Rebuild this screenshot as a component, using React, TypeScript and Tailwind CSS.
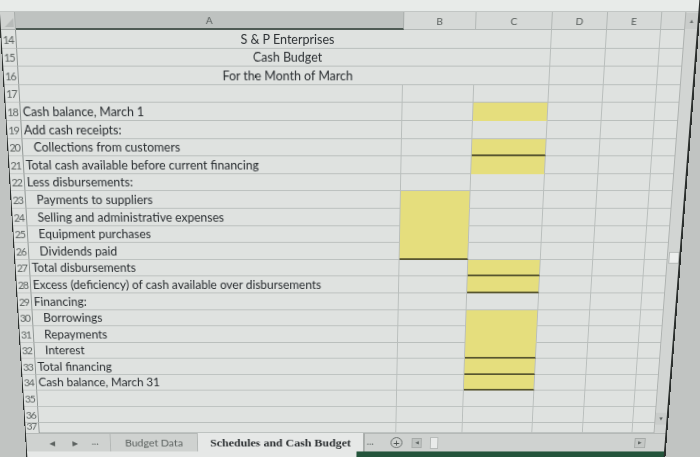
import React from 'react';

type Mark = 'y' | 'yb';

interface Row {
    n: number;
    label?: string;
    title?: string;
    indent?: boolean;
    b?: Mark;
    c?: Mark;
}

const rows: Row[] = [
    { n: 14, title: 'S & P Enterprises' },
    { n: 15, title: 'Cash Budget' },
    { n: 16, title: 'For the Month of March' },
    { n: 17 },
    { n: 18, label: 'Cash balance, March 1', c: 'y' },
    { n: 19, label: 'Add cash receipts:' },
    { n: 20, label: 'Collections from customers', indent: true, c: 'yb' },
    { n: 21, label: 'Total cash available before current financing', c: 'y' },
    { n: 22, label: 'Less disbursements:' },
    { n: 23, label: 'Payments to suppliers', indent: true, b: 'y' },
    { n: 24, label: 'Selling and administrative expenses', indent: true, b: 'y' },
    { n: 25, label: 'Equipment purchases', indent: true, b: 'y' },
    { n: 26, label: 'Dividends paid', indent: true, b: 'yb' },
    { n: 27, label: 'Total disbursements', c: 'yb' },
    { n: 28, label: 'Excess (deficiency) of cash available over disbursements', c: 'yb' },
    { n: 29, label: 'Financing:' },
    { n: 30, label: 'Borrowings', indent: true, c: 'y' },
    { n: 31, label: 'Repayments', indent: true, c: 'y' },
    { n: 32, label: 'Interest', indent: true, c: 'yb' },
    { n: 33, label: 'Total financing', c: 'yb' },
    { n: 34, label: 'Cash balance, March 31', c: 'yb' },
    { n: 35 },
    { n: 36 },
    { n: 37 },
];

const markCls = (m?: Mark) => {
    if (m === 'yb') return 'border-r border-r-[#b9bebc] border-b-2 border-b-[#57552f] bg-[#e5de7d]';
    if (m === 'y') return 'border-r border-r-[#b9bebc] border-b border-b-[#e5de7d] bg-[#e5de7d]';
    return 'border-r border-b border-[#b9bebc]';
};

const SheetRow = ({ row, last }: { row: Row; last: boolean }) => {
    const h = last ? 'h-[12.2px]' : 'h-[18.6px]';
    return (
        <div className={`flex ${h}`}>
            <div className={`w-[15px] shrink-0 flex items-end justify-end pb-[3px] pr-[2px] text-[11px] tracking-[-1px] text-[#5d6361] border-r border-[#8f9593] ${last ? '' : 'border-b border-b-[#c3c7c5]'}`}>
                {row.n}
            </div>
            {row.title !== undefined ? (
                <div className="w-[536px] shrink-0 flex items-end justify-center pb-[1.5px] border-r border-b border-[#b9bebc] pl-[8px] text-[#2a2e31]">
                    {row.title}
                </div>
            ) : (
                <>
                    <div className={`w-[388px] shrink-0 flex items-end pb-[1.5px] whitespace-nowrap border-r border-b border-[#b9bebc] text-[#2a2e31] ${row.indent ? 'pl-[11px]' : 'pl-[2px]'}`}>
                        {row.label}
                    </div>
                    <div className={`w-[72px] shrink-0 ${markCls(row.b)}`} />
                    <div className={`w-[76px] shrink-0 ${markCls(row.c)}`} />
                </>
            )}
            <div className="w-[55px] shrink-0 border-r border-b border-[#b9bebc]" />
            <div className="w-[54px] shrink-0 border-r border-b border-[#b9bebc]" />
            <div className="w-[23px] shrink-0 border-b border-[#b9bebc]" />
        </div>
    );
};

export default function App() {
    return (
        <div className="w-[700px] h-[457px] overflow-hidden bg-[#c1c4c2]">
            <div
                className="w-[699px] origin-[308px_30px] [transform:perspective(400px)_rotateX(-4.6deg)] border-l border-r-2 border-[#2c302e] bg-[#dfe2e0] text-[12.5px] leading-none"
                style={{ fontFamily: 'Lato, "Liberation Sans", sans-serif' }}
            >
                {/* formula bar edge */}
                <div className="h-[12px] bg-[#e8ebe9] border-b border-[#c2c6c4]" />

                <div className="flex">
                    <div className="w-[683px] shrink-0">
                        {/* column headers */}
                        <div className="flex h-[18px] text-[10px] text-[#555b59]">
                            <div className="w-[15px] shrink-0 bg-[#d0d3d1] border-r border-b border-[#a9aeac] flex items-end justify-end pb-[2px] pr-[1px]">
                                <svg width="9" height="9" viewBox="0 0 9 9">
                                    <polygon points="9,0 9,9 0,9" fill="#b7bbb9" />
                                </svg>
                            </div>
                            <div className="w-[388px] shrink-0 bg-[#bec2c0] border-r border-[#a9aeac] border-b-2 border-b-[#4f5b55] flex items-center justify-center">A</div>
                            <div className="w-[72px] shrink-0 bg-[#d6d9d7] border-r border-b border-[#b3b8b6] flex items-center justify-center">B</div>
                            <div className="w-[76px] shrink-0 bg-[#d6d9d7] border-r border-b border-[#b3b8b6] flex items-center justify-center">C</div>
                            <div className="w-[55px] shrink-0 bg-[#d6d9d7] border-r border-b border-[#b3b8b6] flex items-center justify-center">D</div>
                            <div className="w-[54px] shrink-0 bg-[#d6d9d7] border-r border-b border-[#b3b8b6] flex items-center justify-center">E</div>
                            <div className="w-[23px] shrink-0 bg-[#d6d9d7] border-b border-[#b3b8b6]" />
                        </div>

                        {rows.map((r, i) => (
                            <SheetRow key={r.n} row={r} last={i === rows.length - 1} />
                        ))}
                    </div>

                    {/* vertical scrollbar */}
                    <div className="w-[13px] shrink-0 bg-[#d2d5d3] border-l border-[#aeb2b0] flex flex-col items-center">
                        <div className="w-[12px] h-[16px] mt-[1px] flex items-center justify-center bg-[#c9ccca] text-[6px] text-[#6a706e]">▲</div>
                        <div className="w-[11px] h-[13.2px] mt-[234px] bg-[#eceeed] border border-[#b4b8b6]" />
                        <div className="w-[12px] h-[14.2px] mt-[170px] flex items-center justify-center bg-[#c9ccca] text-[6px] text-[#5a605e]">▼</div>
                    </div>
                </div>

                {/* sheet tabs */}
                <div className="flex h-[22.6px] items-stretch bg-[#cfd2d0] border-t border-[#b3b7b5] text-[#5b615f]">
                    <div className="w-[91px] shrink-0 flex items-center text-[8px]">
                        <span className="ml-[25px]">◀</span>
                        <span className="ml-[19px]">▶</span>
                        <span className="ml-[15px] text-[11px] leading-none -mt-[4px]">...</span>
                    </div>
                    <div className="w-[96px] shrink-0 flex items-center justify-center border-l border-r border-[#b3b7b5] text-[11.5px]">
                        Budget Data
                    </div>
                    <div
                        className="w-[182px] shrink-0 flex items-center justify-center bg-[#e6e8e7] border-r-2 border-[#a9adab] text-[13px] font-bold text-[#2c3032] -mt-[1px]"
                        style={{ fontFamily: '"Liberation Serif", serif' }}
                    >
                        Schedules and Cash Budget
                    </div>
                    <div className="w-[12px] shrink-0 flex items-center justify-center text-[11px] -mt-[4px]">...</div>
                    <div className="w-[39px] shrink-0 flex items-center justify-end pr-[10px]">
                        <div className="w-[13px] h-[13px] rounded-full border border-[#5f6563] flex items-center justify-center text-[12px] leading-none text-[#4a504e]">+</div>
                    </div>
                    <div className="flex-1 flex items-center">
                        <div className="w-[11px] h-[12px] flex items-center justify-center bg-[#bfc3c1] border border-[#a6aaa8] text-[5px]">◀</div>
                        <div className="w-[9px] h-[14px] ml-[9px] bg-[#e9ebea] border border-[#b4b8b6]" />
                        <div className="flex-1" />
                        <div className="w-[12px] h-[12px] mr-[21px] flex items-center justify-center bg-[#c5c8c6] border border-[#a6aaa8] text-[5px]">▶</div>
                    </div>
                </div>

                {/* status bar */}
                <div className="flex h-[24px]">
                    <div className="w-[360px] bg-[#e6e8e7]" />
                    <div className="flex-1 bg-[#23543b]" />
                </div>
            </div>
        </div>
    );
}
